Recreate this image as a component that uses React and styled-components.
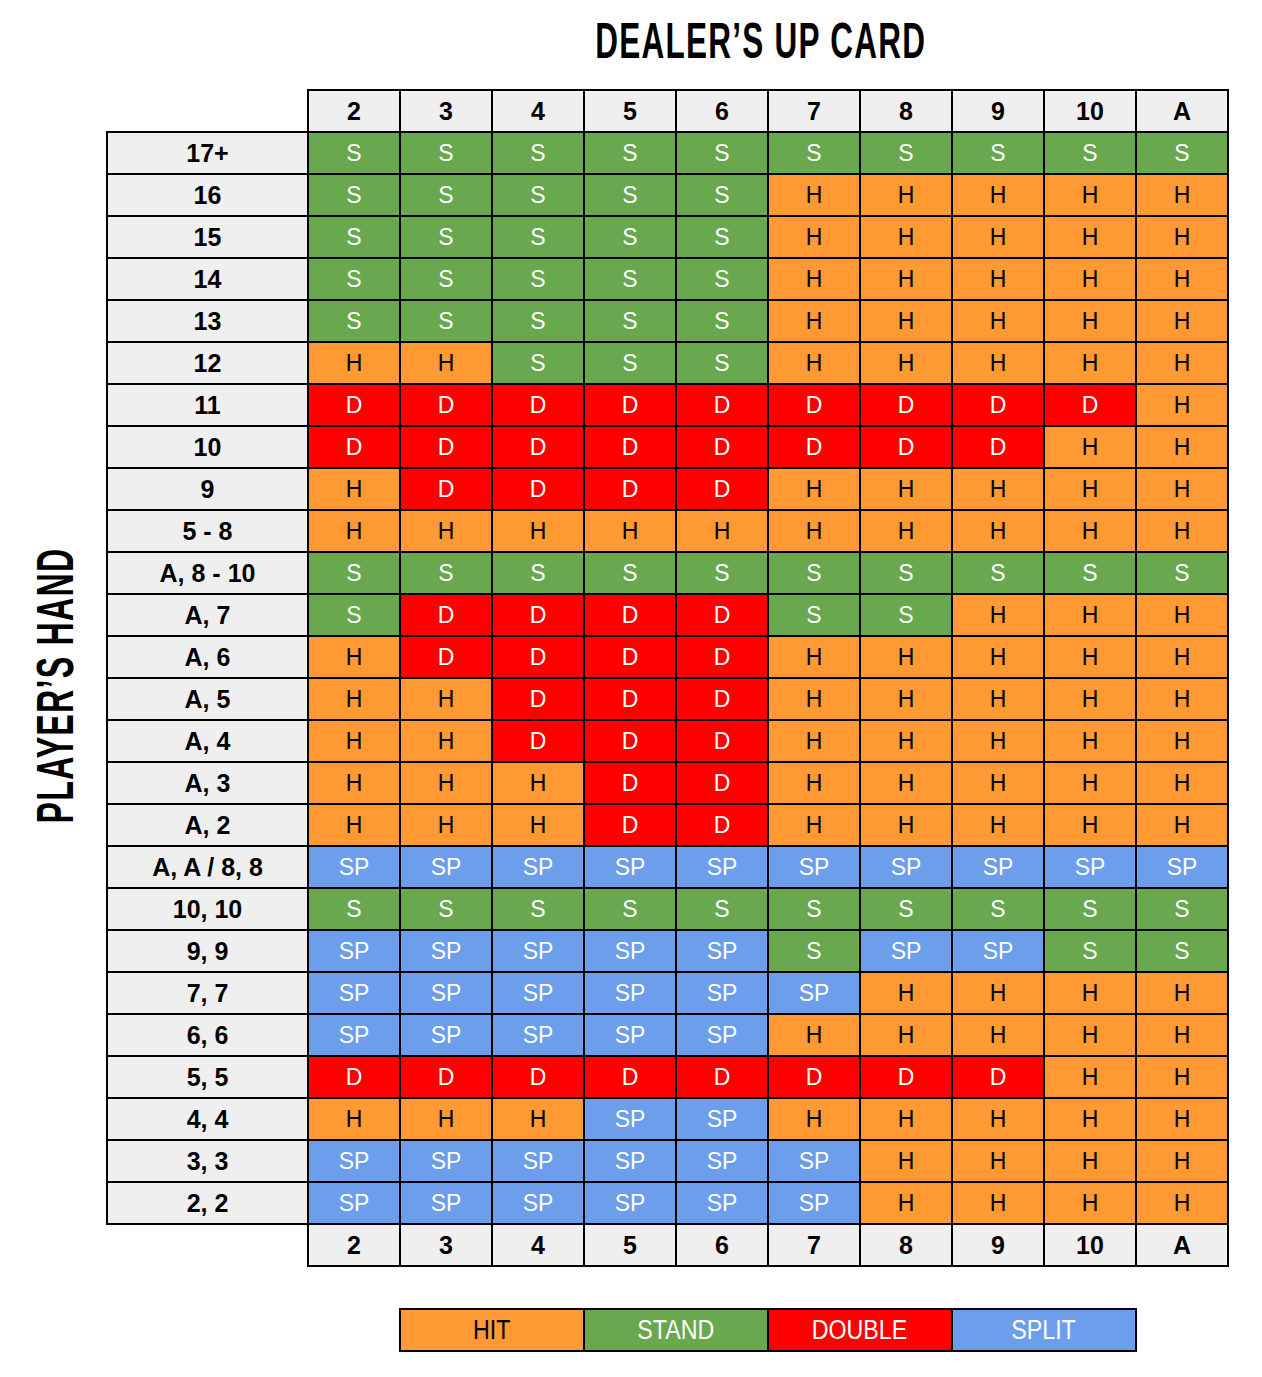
import React from 'react'
import styled, { createGlobalStyle, css } from 'styled-components'

const Global = createGlobalStyle`
  body {
    margin: 0;
    background: #fff;
    font-family: "Liberation Sans", Arial, sans-serif;
  }
`

const COLORS = {
  H: '#ff9933',
  S: '#6aa84f',
  D: '#ff0000',
  SP: '#6d9eeb',
}

const dealer = ['2', '3', '4', '5', '6', '7', '8', '9', '10', 'A']

// each row: label + 10 moves (one per dealer card)
const rows = [
  ['17+', 'S S S S S S S S S S'],
  ['16', 'S S S S S H H H H H'],
  ['15', 'S S S S S H H H H H'],
  ['14', 'S S S S S H H H H H'],
  ['13', 'S S S S S H H H H H'],
  ['12', 'H H S S S H H H H H'],
  ['11', 'D D D D D D D D D H'],
  ['10', 'D D D D D D D D H H'],
  ['9', 'H D D D D H H H H H'],
  ['5 - 8', 'H H H H H H H H H H'],
  ['A, 8 - 10', 'S S S S S S S S S S'],
  ['A, 7', 'S D D D D S S H H H'],
  ['A, 6', 'H D D D D H H H H H'],
  ['A, 5', 'H H D D D H H H H H'],
  ['A, 4', 'H H D D D H H H H H'],
  ['A, 3', 'H H H D D H H H H H'],
  ['A, 2', 'H H H D D H H H H H'],
  ['A, A / 8, 8', 'SP SP SP SP SP SP SP SP SP SP'],
  ['10, 10', 'S S S S S S S S S S'],
  ['9, 9', 'SP SP SP SP SP S SP SP S S'],
  ['7, 7', 'SP SP SP SP SP SP H H H H'],
  ['6, 6', 'SP SP SP SP SP H H H H H'],
  ['5, 5', 'D D D D D D D D H H'],
  ['4, 4', 'H H H SP SP H H H H H'],
  ['3, 3', 'SP SP SP SP SP SP H H H H'],
  ['2, 2', 'SP SP SP SP SP SP H H H H'],
]

const legend = [
  ['H', 'HIT'],
  ['S', 'STAND'],
  ['D', 'DOUBLE'],
  ['SP', 'SPLIT'],
]

export default function App() {
  return (
    <Page>
      <Global />
      <Title>
        <Condensed>DEALER’S UP CARD</Condensed>
      </Title>

      <HeadGrid $edge="top">
        {dealer.map((d) => (
          <HeadCell key={d}>{d}</HeadCell>
        ))}
      </HeadGrid>

      <BodyRow>
        <SideLabel>
          <Rotated>PLAYER’S HAND</Rotated>
        </SideLabel>
        <BodyGrid>
          {rows.map(([label, moves]) => (
            <React.Fragment key={label}>
              <LabelCell>{label}</LabelCell>
              {moves.split(' ').map((m, i) => (
                <MoveCell key={i} $move={m}>
                  {m}
                </MoveCell>
              ))}
            </React.Fragment>
          ))}
        </BodyGrid>
      </BodyRow>

      <HeadGrid $edge="bottom">
        {dealer.map((d) => (
          <HeadCell key={d}>{d}</HeadCell>
        ))}
      </HeadGrid>

      <Legend>
        {legend.map(([m, text]) => (
          <LegendCell key={m} $move={m}>
            <Narrow>{text}</Narrow>
          </LegendCell>
        ))}
      </Legend>
    </Page>
  )
}

const Page = styled.div`
  width: 1262px;
  padding-top: 16px;
  padding-bottom: 26px;
`

const Title = styled.div`
  margin-left: 307px;
  width: 922px;
  height: 50px;
  margin-bottom: 23px;
  display: flex;
  justify-content: center;
`

const Condensed = styled.span`
  display: inline-block;
  font-size: 50px;
  line-height: 1;
  font-weight: 700;
  letter-spacing: 2px;
  color: #000;
  white-space: nowrap;
  transform: translateX(-7px) scaleX(0.63);
`

const HeadGrid = styled.div`
  margin-left: 307px;
  width: 922px;
  box-sizing: border-box;
  display: grid;
  grid-template-columns: repeat(10, 90px);
  gap: 2px;
  background: #000;
  ${({ $edge }) =>
    $edge === 'top'
      ? css`padding: 2px 2px 0 2px;`
      : css`padding: 0 2px 2px 2px;`}
`

const cellBase = css`
  height: 40px;
  display: flex;
  align-items: center;
  justify-content: center;
  white-space: nowrap;
`

const HeadCell = styled.div`
  ${cellBase};
  background: #efefef;
  font-size: 25px;
  font-weight: 700;
  color: #000;
`

const BodyRow = styled.div`
  display: flex;
`

const SideLabel = styled.div`
  width: 106px;
  flex: none;
  display: flex;
  align-items: center;
  justify-content: center;
  padding-top: 14px;
  box-sizing: border-box;
`

const Rotated = styled.span`
  display: inline-block;
  font-size: 51px;
  line-height: 1;
  font-weight: 700;
  letter-spacing: 2px;
  color: #000;
  white-space: nowrap;
  transform: translateX(3px) rotate(-90deg) scaleX(0.63);
`

const BodyGrid = styled.div`
  display: grid;
  grid-template-columns: 199px repeat(10, 90px);
  gap: 2px;
  padding: 2px;
  background: #000;
`

const LabelCell = styled.div`
  ${cellBase};
  background: #efefef;
  font-size: 25px;
  font-weight: 700;
  color: #000;
`

const MoveCell = styled.div`
  ${cellBase};
  padding-top: 1px;
  box-sizing: border-box;
  background: ${({ $move }) => COLORS[$move]};
  color: ${({ $move }) => ($move === 'H' ? '#000' : '#fff')};
  font-size: 23px;
`

const Legend = styled.div`
  margin-top: 41px;
  margin-left: 399px;
  width: 738px;
  box-sizing: border-box;
  display: grid;
  grid-template-columns: repeat(4, 182px);
  gap: 2px;
  padding: 2px;
  background: #000;
`

const LegendCell = styled.div`
  ${cellBase};
  background: ${({ $move }) => COLORS[$move]};
  color: ${({ $move }) => ($move === 'H' ? '#000' : '#fff')};
  font-size: 27px;
`

const Narrow = styled.span`
  display: inline-block;
  transform: scaleX(0.86);
`
